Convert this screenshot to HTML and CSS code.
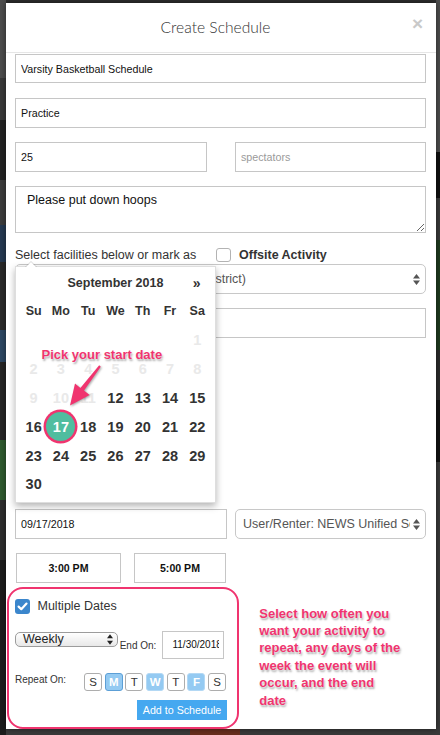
FILE: index.html
```html
<!DOCTYPE html>
<html>
<head>
<meta charset="utf-8">
<title>Create Schedule</title>
<link rel="stylesheet" href="styles.css">
</head>
<body>
<div class="modal">
  <div class="modal-header">
    <h1 class="title">Create Schedule</h1>
    <span class="close">&times;</span>
  </div>
  <div class="modal-body">
    <input class="field h29" type="text" value="Varsity Basketball Schedule">
    <input class="field gap15" type="text" value="Practice">
    <div class="row-two gap14">
      <input class="field" type="text" value="25">
      <input class="field" type="text" placeholder="spectators">
    </div>
    <textarea class="notes gap14">Please put down hoops</textarea>
    <div class="label-row">
      <span class="label-text">Select facilities below or mark as</span>
      <span class="box"></span>
      <span class="offsite">Offsite Activity</span>
    </div>
    <div class="select-box">
      <span class="select-text"><span class="under">Big Gym (NEWS Unified School Di</span>strict)</span>
      <svg class="arrows" viewBox="0 0 7 11" width="7" height="11"><path d="M0 4.5L3.5 0L7 4.5Z M0 6.5H7L3.5 11Z"/></svg>
    </div>
    <input class="field gap14" type="text" value="">

    <div class="row-date">
      <input class="field" type="text" value="09/17/2018">
      <div class="select-box">
        <span class="select-text">User/Renter: NEWS Unified School District</span>
        <svg class="arrows" viewBox="0 0 7 11" width="7" height="11"><path d="M0 4.5L3.5 0L7 4.5Z M0 6.5H7L3.5 11Z"/></svg>
      </div>
    </div>
    <div class="row-time">
      <div class="time t1">3:00 PM</div>
      <div class="time t2">5:00 PM</div>
    </div>

    <div class="multi">
      <div class="multi-check">
        <span class="checked"><svg viewBox="0 0 15 15" width="15" height="15"><path d="M3.6 7.6L6.3 10.2L11.5 4.6" fill="none" stroke="#fff" stroke-width="2.2" stroke-linecap="round" stroke-linejoin="round"/></svg></span>
        <span class="multi-label">Multiple Dates</span>
      </div>
      <div class="weekly-row">
        <div class="weekly">
          <span>Weekly</span>
          <svg class="warrows" viewBox="0 0 6 11" width="6" height="11"><path d="M0 4.3L3 0.3L6 4.3Z M0 6.7H6L3 10.7Z"/></svg>
        </div>
        <span class="small-label end-label">End On:</span>
        <input class="end-input" type="text" value="11/30/2018">
      </div>
      <div class="repeat-row">
        <span class="small-label repeat-label">Repeat On:</span>
        <div class="days">
          <span class="day">S</span>
          <span class="day on focus">M</span>
          <span class="day">T</span>
          <span class="day on">W</span>
          <span class="day">T</span>
          <span class="day on">F</span>
          <span class="day">S</span>
        </div>
      </div>
      <div class="btn-row">
        <span class="add-btn">Add to Schedule</span>
      </div>
      <div class="pink-outline"></div>
    </div>

    <div class="calendar">
      <div class="cal-grid">
        <span class="cal-prev"></span>
        <span class="cal-title">September 2018</span>
        <span class="cal-next">&raquo;</span>
        <span class="dow">Su</span><span class="dow">Mo</span><span class="dow">Tu</span><span class="dow">We</span><span class="dow">Th</span><span class="dow">Fr</span><span class="dow">Sa</span>
        <span></span><span></span><span></span><span></span><span></span><span></span><span class="d off">1</span>
        <span class="d off">2</span><span class="d off">3</span><span class="d off">4</span><span class="d off">5</span><span class="d off">6</span><span class="d off">7</span><span class="d off">8</span>
        <span class="d off">9</span><span class="d off">10</span><span class="d off">11</span><span class="d">12</span><span class="d">13</span><span class="d">14</span><span class="d">15</span>
        <span class="d">16</span><span class="d"><span class="sel">17</span></span><span class="d">18</span><span class="d">19</span><span class="d">20</span><span class="d">21</span><span class="d">22</span>
        <span class="d">23</span><span class="d">24</span><span class="d">25</span><span class="d">26</span><span class="d">27</span><span class="d">28</span><span class="d">29</span>
        <span class="d">30</span>
      </div>
      <span class="pick-note">Pick your start date</span>
      <svg class="pick-arrow" viewBox="0 0 201 237" width="201" height="237"><polygon points="84.2,99.3 85.8,100.7 69,124.5 74.6,128.9 55,139.5 60,117.4 65.4,121.9"/></svg>
    </div>

    <div class="repeat-note">Select how often you<br>want your activity to<br>repeat, any days of the<br>week the event will<br>occur, and the end<br>date</div>
  </div>
</div>
</body>
</html>
```

FILE: styles.css
```css
html, body {
  margin: 0;
  padding: 0;
}

body {
  width: 440px;
  height: 735px;
  overflow: hidden;
  font-family: "Liberation Sans", Arial, sans-serif;
  color: #333;
  background-color: #2e2e2e;
  background-image:
    linear-gradient(to bottom, #4d4d4d 0 78px, #3a3a3a 78px 120px, #232323 120px 180px, #3d3d3d 180px 225px, #263a52 225px 262px, #2a2a2a 262px 330px, #2c4763 330px 362px, #262626 362px 440px, #2e5a2e 440px 500px, #2d2d2d 500px 560px, #1c1c1c 560px 735px),
    linear-gradient(to bottom, #4e4e4e 0 152px, #111 152px 198px, #3a3a3a 198px 240px, #1f3b1f 240px 350px, #2b2b2b 350px 400px, #121212 400px 462px, #3a3a3a 462px 735px),
    linear-gradient(to right, #3a3a3a 0 190px, #6a2e1e 190px 240px, #3a3a3a 240px 440px);
  background-size: 6px 735px, 4px 735px, 440px 6px;
  background-position: 0 0, 436px 0, 0 729px;
  background-repeat: no-repeat;
}

.modal {
  position: relative;
  margin: 3px 0 0 6px;
  width: 430px;
  height: 726px;
  background: #fff;
  box-shadow: 0 0 6px rgba(0, 0, 0, 0.5);
}

.modal-header {
  position: relative;
  box-sizing: border-box;
  height: 50px;
  border-bottom: 1px solid #e6e6e6;
  display: flex;
  align-items: center;
  justify-content: center;
  padding-right: 11px;
  padding-bottom: 1px;
}

.title {
  margin: 0;
  font-family: Lato, "Open Sans", sans-serif;
  font-weight: 300;
  font-size: 15.6px;
  color: #333;
}

.close {
  position: absolute;
  right: 13px;
  top: 11px;
  font-family: "Liberation Sans", Arial, sans-serif;
  font-weight: bold;
  font-size: 19px;
  line-height: 1;
  color: #c9c9c9;
}

.modal-body {
  position: relative;
  padding: 1px 10px 0 9px;
}

.field {
  display: block;
  box-sizing: border-box;
  width: 100%;
  min-width: 0;
  height: 30px;
  margin: 0;
  padding: 0 5px;
  border: 1px solid #c6c6c6;
  border-radius: 0;
  background: #fff;
  font-family: "Liberation Sans", Arial, sans-serif;
  font-size: 10.7px;
  color: #111;
  outline: none;
}

.field::placeholder {
  color: #9a9a9a;
}

.h29 { height: 29px; }
.gap15 { margin-top: 15px; }
.gap14 { margin-top: 14px; }

.row-two {
  display: grid;
  grid-template-columns: 192px 191px;
  column-gap: 28px;
}

.notes {
  display: block;
  box-sizing: border-box;
  width: 100%;
  height: 47px;
  padding: 5px 11px;
  border: 1px solid #c6c6c6;
  border-radius: 0;
  font-family: "Liberation Sans", Arial, sans-serif;
  font-size: 12.5px;
  line-height: 16px;
  color: #111;
  outline: none;
}

.label-row {
  margin-top: 13px;
  height: 18px;
  display: flex;
  align-items: center;
  font-size: 12.5px;
}

.label-text {
  width: 201px;
  flex: none;
  color: #333;
}

.box {
  box-sizing: border-box;
  width: 15px;
  height: 14px;
  border: 1px solid #b3b3b3;
  border-radius: 3px;
  flex: none;
}

.offsite {
  margin-left: 8px;
  font-weight: bold;
  color: #333;
}

.select-box {
  box-sizing: border-box;
  min-width: 0;
  height: 30px;
  border: 1px solid #c8c8c8;
  border-radius: 5px;
  display: flex;
  align-items: center;
  padding: 0 5px 0 7px;
  font-size: 12.5px;
  color: #555;
  background: #fff;
}

.select-text {
  flex: 1;
  min-width: 0;
  white-space: nowrap;
  overflow: hidden;
}

.under {
  color: transparent;
}

.arrows {
  flex: none;
  margin-left: 3px;
  fill: #555;
}

.row-date {
  margin-top: 171px;
  display: grid;
  grid-template-columns: 212px minmax(0, 1fr);
  column-gap: 8px;
}

.row-date .select-box {
  padding-left: 7px;
}

.row-time {
  margin-top: 14px;
  margin-left: 1px;
  display: flex;
  gap: 13px;
}

.time {
  box-sizing: border-box;
  height: 29.5px;
  border: 1px solid #c6c6c6;
  display: flex;
  align-items: center;
  justify-content: center;
  font-weight: bold;
  font-size: 10.6px;
  color: #111;
}

.t1 { width: 105px; }
.t2 { width: 92px; }

.multi {
  position: relative;
  width: 212px;
  padding: 16px 0 9px 0;
}

.multi-check {
  height: 15px;
  display: flex;
  align-items: center;
}

.checked {
  width: 15px;
  height: 15px;
  border-radius: 3px;
  background: #3b86cc;
  display: block;
  flex: none;
}

.checked svg {
  display: block;
}

.multi-label {
  margin-left: 7.5px;
  font-size: 12.5px;
  color: #333;
}

.weekly-row {
  margin-top: 17px;
  height: 28px;
  display: flex;
  align-items: flex-start;
}

.weekly {
  box-sizing: border-box;
  width: 103px;
  height: 15.5px;
  margin-top: 1px;
  border: 1px solid #9c9c9c;
  border-radius: 5px;
  background: linear-gradient(#ffffff, #e8e8e8);
  display: flex;
  align-items: center;
  justify-content: space-between;
  padding: 0 4px 0 7px;
  font-size: 12.5px;
  color: #222;
}

.warrows {
  fill: #222;
}

.small-label {
  font-size: 10px;
  color: #333;
}

.end-label {
  align-self: center;
  margin-left: 1.7px;
  padding-top: 1px;
}

.end-input {
  box-sizing: border-box;
  width: 62px;
  height: 28px;
  margin: 0 0 0 5.6px;
  padding: 0 3.5px 0 9.5px;
  border: 1px solid #c6c6c6;
  border-radius: 0;
  font-family: "Liberation Sans", Arial, sans-serif;
  font-size: 10px;
  color: #111;
  outline: none;
}

.repeat-row {
  margin-top: 14px;
  height: 18.5px;
  display: flex;
  align-items: flex-start;
}

.repeat-label {
  width: 69px;
  flex: none;
  line-height: 13px;
}

.days {
  display: flex;
  gap: 2.7px;
}

.day {
  box-sizing: border-box;
  width: 18px;
  height: 18.5px;
  border: 1px solid #adadad;
  border-radius: 3px;
  display: flex;
  align-items: center;
  justify-content: center;
  font-size: 11.5px;
  color: #333;
  background: #fff;
}

.day.on {
  background: #94caf2;
  border-color: #b3d8f4;
  color: #fff;
  font-weight: bold;
}

.day.focus {
  border-color: #5c9fd6;
}

.btn-row {
  margin-top: 9px;
  display: flex;
  justify-content: flex-end;
}

.add-btn {
  width: 90px;
  height: 19.5px;
  background: #45a8f0;
  color: #fff;
  font-size: 10.7px;
  display: flex;
  align-items: center;
  justify-content: center;
}

.pink-outline {
  position: absolute;
  left: -8.3px;
  top: 4px;
  width: 232.6px;
  height: 142px;
  box-sizing: border-box;
  border: 2.5px solid #f0346f;
  border-radius: 16px;
  pointer-events: none;
}

.calendar {
  position: absolute;
  left: 9px;
  top: 213px;
  box-sizing: border-box;
  width: 201px;
  height: 237px;
  padding: 2px 0 0 4px;
  background: #fff;
  border: 1px solid rgba(0, 0, 0, 0.13);
  box-shadow: 0 3px 7px rgba(0, 0, 0, 0.3);
}

.calendar::before {
  content: "";
  position: absolute;
  left: 9px;
  top: -6px;
  border-left: 6px solid transparent;
  border-right: 6px solid transparent;
  border-bottom: 6px solid rgba(0, 0, 0, 0.15);
}

.calendar::after {
  content: "";
  position: absolute;
  left: 10px;
  top: -5px;
  border-left: 5px solid transparent;
  border-right: 5px solid transparent;
  border-bottom: 5px solid #fff;
}

.cal-grid {
  display: grid;
  grid-template-columns: repeat(7, 27.28px);
  grid-template-rows: 28px 28.5px repeat(6, 28.9px);
  align-items: center;
  justify-items: center;
  font-weight: bold;
  color: #333;
}

.cal-title {
  grid-column: 2 / span 5;
  font-size: 12.5px;
}

.cal-next {
  font-size: 14px;
  padding-right: 1px;
}

.dow {
  font-size: 12.5px;
}

.d {
  font-size: 14.5px;
  width: 100%;
  height: 100%;
  display: flex;
  align-items: center;
  justify-content: center;
}

.d.off {
  color: #e9e9e9;
}

.sel {
  flex: none;
  width: 29px;
  height: 29px;
  border-radius: 50%;
  background: #50bd9f;
  box-shadow: 0 0 0 2.5px #f0346f;
  color: #fff;
  display: flex;
  align-items: center;
  justify-content: center;
}

.pick-note {
  position: absolute;
  left: 25.5px;
  top: 79px;
  font-weight: bold;
  font-size: 13px;
  line-height: 17px;
  color: #f0346f;
  white-space: nowrap;
  text-shadow: 0 0 2px #fff, 1px 1.5px 2px rgba(0, 0, 0, 0.35);
}

.pick-arrow {
  position: absolute;
  left: -1px;
  top: -1px;
  fill: #f0346f;
  filter: drop-shadow(1px 1.5px 1.2px rgba(0, 0, 0, 0.35));
}

.repeat-note {
  position: absolute;
  left: 253.3px;
  top: 551.6px;
  font-weight: bold;
  font-size: 13px;
  line-height: 17.4px;
  color: #f0346f;
  white-space: nowrap;
  text-shadow: 0 0 2px #fff, 1px 1.5px 2px rgba(0, 0, 0, 0.35);
}
```
